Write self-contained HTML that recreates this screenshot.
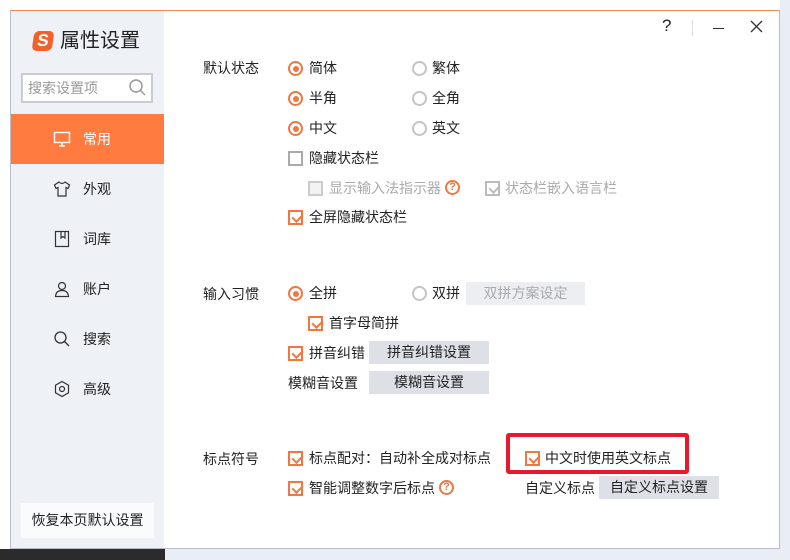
<!DOCTYPE html><html><head><meta charset="utf-8"><style>
*{margin:0;padding:0;box-sizing:border-box}
body{width:790px;height:560px;position:relative;overflow:hidden;background:#fff;font-family:"Liberation Sans","Noto Sans CJK SC",sans-serif;font-size:14px;color:#222}
.a{position:absolute;white-space:nowrap}
.win{position:absolute;left:10px;top:10px;width:770px;height:539px;background:#fff;border:1px solid #b9bec6;border-top:1px solid #f08a4b}
.side{position:absolute;left:11px;top:11px;width:153px;height:537px;background:#eef1f6}
.t{line-height:20px}
.r{position:absolute;width:15px;height:15px;border-radius:50%;border:2px solid #c4c4c4;background:#fff}
.r.on{border:2px solid #f3763f}
.r.on::after{content:"";position:absolute;left:2.5px;top:2.5px;width:6px;height:6px;border-radius:50%;background:#f3763f}
.c{position:absolute;width:15px;height:15px;border:2px solid #aaa;background:#fff}
.c.on{border-color:#f3763f}
.c.on::after{content:"";position:absolute;left:3.5px;top:0px;width:5px;height:8px;border:solid #f3763f;border-width:0 2px 2px 0;transform:rotate(45deg)}
.c.dis{border-color:#ccc;background:#f2f3f5}
.c.dis2{border-color:#bbb}
.c.dis2::after{content:"";position:absolute;left:3.5px;top:0;width:5px;height:8px;border:solid #bbb;border-width:0 2px 2px 0;transform:rotate(45deg)}
.btn{position:absolute;background:#dde0e6;text-align:center;line-height:23px;height:23px}
.q{position:absolute;width:15px;height:15px;border:2px solid #f3763f;border-radius:50%;color:#f3763f;font-size:11px;font-weight:bold;line-height:11px;text-align:center}
.g{color:#aaa}
</style></head><body>
<div class="a" style="left:0;top:0;width:10px;height:560px;background:#fff"></div>
<div class="a" style="left:780px;top:0;width:10px;height:560px;background:#e9eef6"></div>
<div class="a" style="left:0;top:549px;width:165px;height:11px;background:#2b2b2b"></div>
<div class="a" style="left:165px;top:549px;width:625px;height:11px;background:#e9eef6"></div>
<div class="win"></div>
<div class="side"></div>
<div class="a" style="left:33px;top:31px;width:20px;height:20px;background:#f0622a;border-radius:5px;transform:skewX(-8deg);color:#fff;font-weight:bold;font-size:17px;line-height:20px;text-align:center">S</div>
<div class="a" style="left:60px;top:28px;font-size:20px;line-height:26px;color:#222">属性设置</div>
<div class="a" style="left:21px;top:73px;width:132px;height:30px;border:2px solid #c9ccd2;background:#fff"></div>
<div class="a g" style="left:28px;top:78px;line-height:20px;font-size:14px;color:#999">搜索设置项</div>
<svg class="a" style="left:128px;top:78px" width="20" height="20"><circle cx="8" cy="8" r="6" fill="none" stroke="#999" stroke-width="1.5"/><path d="M12.5 12.5L17 17" stroke="#999" stroke-width="1.5"/></svg>
<div class="a" style="left:11px;top:114px;width:153px;height:50px;background:#ff7b3f"></div>
<svg class="a" style="left:53px;top:130px" width="18" height="18"><rect x="1.5" y="2.5" width="15" height="10" fill="none" stroke="#fff" stroke-width="1.4"/><path d="M9 12.5V16M6 16H12" stroke="#fff" stroke-width="1.4"/></svg>
<div class="a t" style="left:83px;top:129px;color:#fff">常用</div>
<svg class="a" style="left:53px;top:180px" width="18" height="18" fill="none" stroke="#333" stroke-width="1.2"><path d="M6 2L1.5 5L3 8.5L5 7.5V16H13V7.5L15 8.5L16.5 5L12 2Q9 5 6 2Z"/></svg>
<div class="a t" style="left:83px;top:179px">外观</div>
<svg class="a" style="left:53px;top:230px" width="18" height="18" fill="none" stroke="#333" stroke-width="1.2"><rect x="2.5" y="1.5" width="13" height="15"/><path d="M8 1.5V8L10 6.5L12 8V1.5"/></svg>
<div class="a t" style="left:83px;top:229px">词库</div>
<svg class="a" style="left:53px;top:280px" width="18" height="18" fill="none" stroke="#333" stroke-width="1.2"><circle cx="9" cy="6" r="3.5"/><path d="M2.5 16.5Q3 10.5 9 10.5Q15 10.5 15.5 16.5Z"/></svg>
<div class="a t" style="left:83px;top:279px">账户</div>
<svg class="a" style="left:53px;top:330px" width="18" height="18" fill="none" stroke="#333" stroke-width="1.3"><circle cx="7.5" cy="7.5" r="5.5"/><path d="M11.5 11.5L16 16"/></svg>
<div class="a t" style="left:83px;top:329px">搜索</div>
<svg class="a" style="left:53px;top:380px" width="18" height="18" fill="none" stroke="#333" stroke-width="1.2"><path d="M9 1.5L15.5 5.25V12.75L9 16.5L2.5 12.75V5.25Z"/><circle cx="9" cy="9" r="2.5"/></svg>
<div class="a t" style="left:83px;top:379px">高级</div>
<div class="a" style="left:21px;top:503px;width:133px;height:35px;background:#fafbfc;line-height:35px;text-align:center">恢复本页默认设置</div>
<div class="a" style="left:662px;top:16px;font-size:17px">?</div>
<div class="a" style="left:692px;top:20px;width:1px;height:16px;background:#ddd"></div>
<div class="a" style="left:713px;top:28px;width:11px;height:1.3px;background:#333"></div>
<svg class="a" style="left:750px;top:20px" width="13" height="13"><path d="M1 1L12 12M12 1L1 12" stroke="#333" stroke-width="1.3"/></svg>
<div class="a t" style="left:203px;top:58px">默认状态</div>
<div class="r on" style="left:288px;top:61px"></div><div class="a t" style="left:309px;top:58px">简体</div>
<div class="r" style="left:412px;top:61px"></div><div class="a t" style="left:432px;top:58px">繁体</div>
<div class="r on" style="left:288px;top:91px"></div><div class="a t" style="left:309px;top:88px">半角</div>
<div class="r" style="left:412px;top:91px"></div><div class="a t" style="left:432px;top:88px">全角</div>
<div class="r on" style="left:288px;top:121px"></div><div class="a t" style="left:309px;top:118px">中文</div>
<div class="r" style="left:412px;top:121px"></div><div class="a t" style="left:432px;top:118px">英文</div>
<div class="c" style="left:288px;top:151px"></div><div class="a t" style="left:309px;top:148px">隐藏状态栏</div>
<div class="c dis" style="left:308px;top:181px"></div><div class="a t g" style="left:329px;top:178px">显示输入法指示器</div>
<div class="q" style="left:445px;top:180px">?</div>
<div class="c dis2" style="left:485px;top:181px"></div><div class="a t g" style="left:505px;top:178px">状态栏嵌入语言栏</div>
<div class="c on" style="left:288px;top:210px"></div><div class="a t" style="left:309px;top:207px">全屏隐藏状态栏</div>
<div class="a t" style="left:203px;top:284px">输入习惯</div>
<div class="r on" style="left:288px;top:286px"></div><div class="a t" style="left:309px;top:283px">全拼</div>
<div class="r" style="left:412px;top:286px"></div><div class="a t" style="left:432px;top:283px">双拼</div>
<div class="btn g" style="left:466px;top:282px;width:119px;background:#eceef1">双拼方案设定</div>
<div class="c on" style="left:308px;top:316px"></div><div class="a t" style="left:329px;top:313px">首字母简拼</div>
<div class="c on" style="left:288px;top:346px"></div><div class="a t" style="left:309px;top:343px">拼音纠错</div>
<div class="btn" style="left:369px;top:341px;width:120px">拼音纠错设置</div>
<div class="a t" style="left:288px;top:373px">模糊音设置</div>
<div class="btn" style="left:369px;top:371px;width:120px">模糊音设置</div>
<div class="a t" style="left:203px;top:449px">标点符号</div>
<div class="c on" style="left:288px;top:451px"></div><div class="a t" style="left:309px;top:448px">标点配对：自动补全成对标点</div>
<div class="c on" style="left:525px;top:451px"></div><div class="a t" style="left:545px;top:448px">中文时使用英文标点</div>
<div class="a" style="left:506px;top:433px;width:183px;height:41px;border:4px solid #e8192c;border-radius:3px"></div>
<div class="c on" style="left:288px;top:481px"></div><div class="a t" style="left:309px;top:478px">智能调整数字后标点</div>
<div class="q" style="left:439px;top:480px">?</div>
<div class="a t" style="left:525px;top:478px">自定义标点</div>
<div class="btn" style="left:599px;top:476px;width:120px">自定义标点设置</div>
</body></html>
